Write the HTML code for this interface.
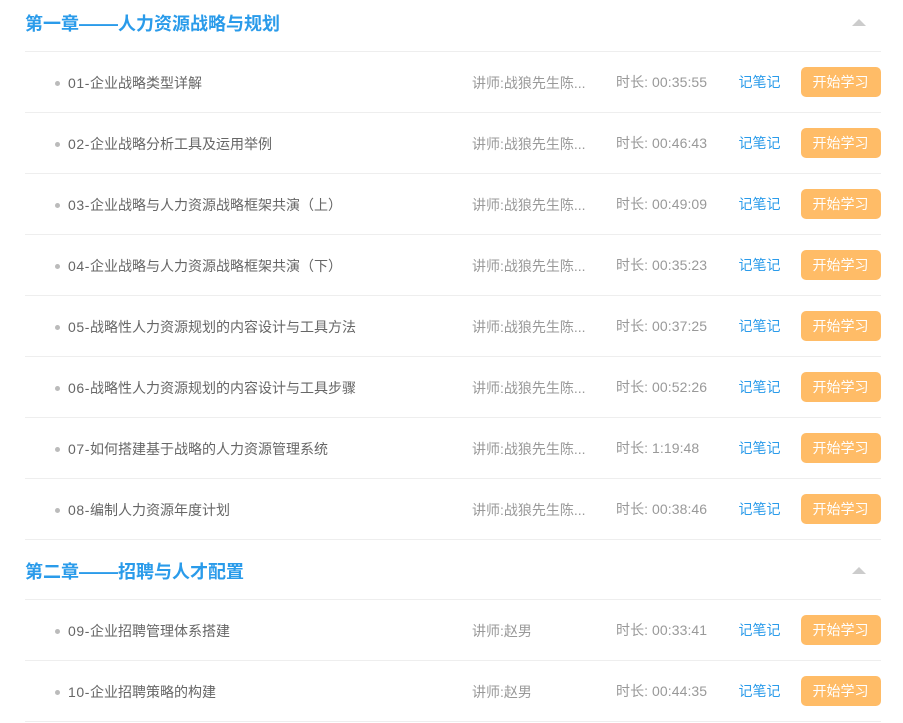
<!DOCTYPE html>
<html lang="zh-CN"><head><meta charset="utf-8">
<style>
html,body{margin:0;padding:0;background:#fff}
body{width:903px;height:723px;overflow:hidden;position:relative;font-family:"Liberation Sans","Noto Sans CJK SC",sans-serif;font-size:14px}
.h{position:absolute;left:25px;width:856px;height:52px;border-bottom:1px solid #eee;box-sizing:content-box}
.h b{position:absolute;left:0;top:12px;font-size:18px;line-height:26px;color:#2a9bea;font-weight:700;white-space:nowrap}
.h b em{font-style:normal;display:inline-block;margin-right:3px;transform:scaleX(1.0833);transform-origin:0 50%}
.h i{position:absolute;left:827px;top:20px;width:0;height:0;border:7px solid transparent;border-top:0;border-bottom:7px solid #ccc}
.r{position:absolute;left:25px;width:856px;height:60px;border-bottom:1px solid #eee}
.r span{position:absolute;white-space:nowrap;line-height:20px}
.r em{font-style:normal;letter-spacing:.6px}
.d{left:30px;top:29px;width:5px;height:5px;border-radius:50%;background:#bbb}
.t{left:43px;top:21px;color:#666;font-size:14px}
.a{left:447px;top:21px;color:#999}
.l{left:591px;top:20px;color:#999;letter-spacing:.07px}
.n{left:713.5px;top:20px;color:#2a9bea}
.b{left:776px;top:15px;width:79px;padding-right:1px;height:30px;line-height:30px!important;border-radius:5px;background:#ffbc67;color:#fff;text-align:center}
</style></head><body>
<div class="h" style="top:-1px"><b>第一章<em>——</em>人力资源战略与规划</b><i></i></div>
<div class="r" style="top:52px"><span class="d"></span><span class="t"><em>01-</em>企业战略类型详解</span><span class="a">讲师:战狼先生陈...</span><span class="l">时长: 00:35:55</span><span class="n">记笔记</span><span class="b">开始学习</span></div>
<div class="r" style="top:113px"><span class="d"></span><span class="t"><em>02-</em>企业战略分析工具及运用举例</span><span class="a">讲师:战狼先生陈...</span><span class="l">时长: 00:46:43</span><span class="n">记笔记</span><span class="b">开始学习</span></div>
<div class="r" style="top:174px"><span class="d"></span><span class="t"><em>03-</em>企业战略与人力资源战略框架共演（上）</span><span class="a">讲师:战狼先生陈...</span><span class="l">时长: 00:49:09</span><span class="n">记笔记</span><span class="b">开始学习</span></div>
<div class="r" style="top:235px"><span class="d"></span><span class="t"><em>04-</em>企业战略与人力资源战略框架共演（下）</span><span class="a">讲师:战狼先生陈...</span><span class="l">时长: 00:35:23</span><span class="n">记笔记</span><span class="b">开始学习</span></div>
<div class="r" style="top:296px"><span class="d"></span><span class="t"><em>05-</em>战略性人力资源规划的内容设计与工具方法</span><span class="a">讲师:战狼先生陈...</span><span class="l">时长: 00:37:25</span><span class="n">记笔记</span><span class="b">开始学习</span></div>
<div class="r" style="top:357px"><span class="d"></span><span class="t"><em>06-</em>战略性人力资源规划的内容设计与工具步骤</span><span class="a">讲师:战狼先生陈...</span><span class="l">时长: 00:52:26</span><span class="n">记笔记</span><span class="b">开始学习</span></div>
<div class="r" style="top:418px"><span class="d"></span><span class="t"><em>07-</em>如何搭建基于战略的人力资源管理系统</span><span class="a">讲师:战狼先生陈...</span><span class="l">时长: 1:19:48</span><span class="n">记笔记</span><span class="b">开始学习</span></div>
<div class="r" style="top:479px"><span class="d"></span><span class="t"><em>08-</em>编制人力资源年度计划</span><span class="a">讲师:战狼先生陈...</span><span class="l">时长: 00:38:46</span><span class="n">记笔记</span><span class="b">开始学习</span></div>
<div class="h" style="top:547px"><b>第二章<em>——</em>招聘与人才配置</b><i></i></div>
<div class="r" style="top:600px"><span class="d"></span><span class="t"><em>09-</em>企业招聘管理体系搭建</span><span class="a">讲师:赵男</span><span class="l">时长: 00:33:41</span><span class="n">记笔记</span><span class="b">开始学习</span></div>
<div class="r" style="top:661px"><span class="d"></span><span class="t"><em>10-</em>企业招聘策略的构建</span><span class="a">讲师:赵男</span><span class="l">时长: 00:44:35</span><span class="n">记笔记</span><span class="b">开始学习</span></div>
</body></html>
